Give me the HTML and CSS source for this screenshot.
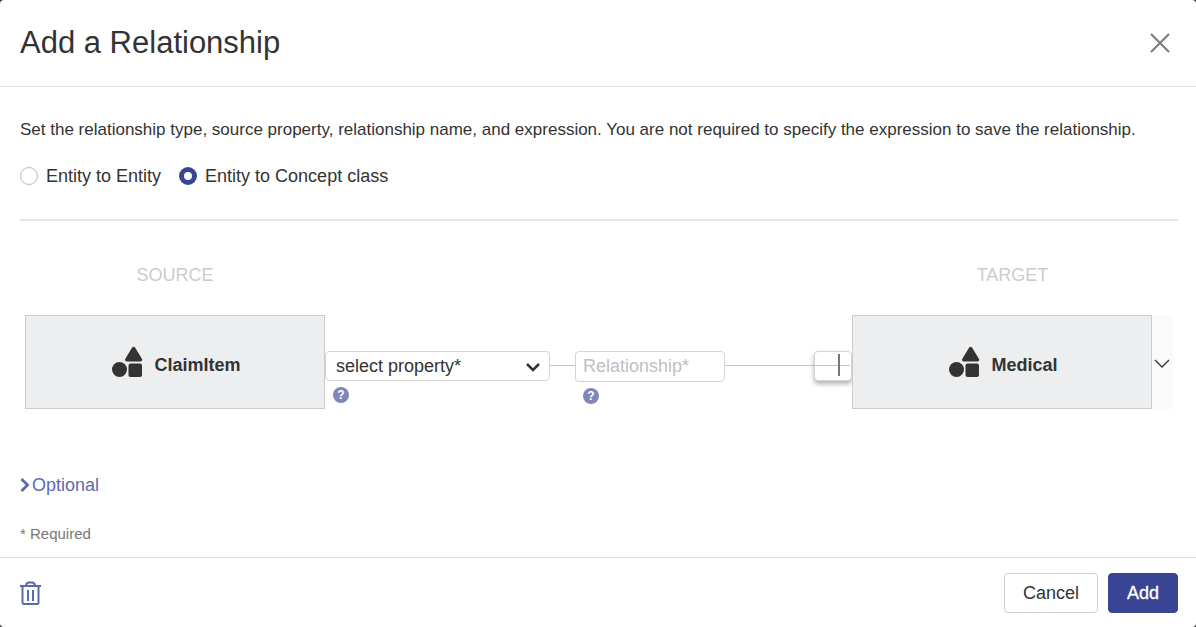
FILE: index.html
```html
<!DOCTYPE html>
<html lang="en">
<head>
  <meta charset="UTF-8" />
  <meta name="viewport" content="width=device-width, initial-scale=1.0"/>
  <title>Add a Relationship</title>
  <link rel="stylesheet" href="styles.css">
</head>
<body>
  <div class="modal">
    <header class="modal-header">
      <h1>Add a Relationship</h1>
      <button class="icon-btn" type="button" aria-label="Close">
        <svg width="20" height="20" viewBox="0 0 20 20" fill="none" stroke="#7a7a7a" stroke-width="2">
          <path d="M1 1l18 18M19 1L1 19"/>
        </svg>
      </button>
    </header>

    <main class="modal-body">
      <p class="intro">Set the relationship type, source property, relationship name, and expression. You are not required to specify the expression to save the relationship.</p>

      <div class="types">
        <label><input type="radio" name="type" value="entity"> Entity to Entity</label>
        <label><input type="radio" name="type" value="concept" checked> Entity to Concept class</label>
      </div>

      <hr>

      <div class="mapping">
        <section class="node">
          <h2>SOURCE</h2>
          <div class="card">
            <svg class="shapes" width="32" height="32" viewBox="0 0 32 32" fill="#333">
              <path d="M21 1.800Q22.600-.2 24.200 1.800L31 13Q31.600 15.400 29.500 15.500H15.700Q13.600 15.400 14.200 13Z"/>
              <circle cx="8.500" cy="23.500" r="7.500"/>
              <rect x="17.500" y="17.500" width="13.500" height="13.500" rx="2"/>
            </svg>
            <span>ClaimItem</span>
          </div>
        </section>

        <div class="link">
          <div class="field property">
            <div class="select-wrap">
              <select aria-label="Source property">
                <option>select property*</option>
              </select>
              <svg class="chevron" width="14" height="10" viewBox="0 0 14 10" fill="none" stroke="#333" stroke-width="2.500">
                <path d="M1 2l6 6 6-6"/>
              </svg>
            </div>
            <button class="help" type="button" aria-label="Property help">?</button>
          </div>
          <div class="line short"></div>
          <div class="field name">
            <input type="text" placeholder="Relationship*" aria-label="Relationship">
            <button class="help" type="button" aria-label="Relationship help">?</button>
          </div>
          <div class="line"></div>
          <button class="join" type="button" aria-label="Join property">
            <svg width="36" height="28" viewBox="0 0 36 28">
              <path d="M0 13.500h35" stroke="#c4c4c4"/>
              <path d="M24 2v22" stroke="#777" stroke-width="2"/>
            </svg>
          </button>
        </div>

        <section class="node">
          <h2>TARGET</h2>
          <div class="target">
            <div class="card">
              <svg class="shapes" width="32" height="32" viewBox="0 0 32 32" fill="#333">
                <path d="M21 1.800Q22.600-.2 24.200 1.800L31 13Q31.600 15.400 29.500 15.500H15.700Q13.600 15.400 14.200 13Z"/>
                <circle cx="8.500" cy="23.500" r="7.500"/>
                <rect x="17.500" y="17.500" width="13.500" height="13.500" rx="2"/>
              </svg>
              <span>Medical</span>
            </div>
            <button class="toggle" type="button" aria-label="Choose target">
              <svg width="16" height="10" viewBox="0 0 16 10" fill="none" stroke="#333" stroke-width="1.300">
                <path d="M1 1l7 7 7-7"/>
              </svg>
            </button>
          </div>
        </section>
      </div>

      <a class="optional" href="#">
        <svg width="10" height="14" viewBox="0 0 10 14" fill="none" stroke="#5b69af" stroke-width="2.800">
          <path d="M1.500 1l6 6-6 6"/>
        </svg>
        Optional
      </a>
      <p class="required">* Required</p>
    </main>

    <footer class="modal-footer">
      <button class="icon-btn" type="button" aria-label="Delete">
        <svg width="21" height="25" viewBox="0 0 21 25" fill="none" stroke="#5b69af" stroke-width="2">
          <path d="M0 5h21" />
          <path d="M6 5q0-3.500 3-3.500h3q3 0 3 3.500"/>
          <path d="M2.500 5v16.500q0 1.500 1.500 1.500h13q1.500 0 1.500-1.500V5"/>
          <path d="M8 9v11M13 9v11"/>
        </svg>
      </button>
      <div class="actions">
        <button class="btn" type="button">Cancel</button>
        <button class="btn primary" type="button">Add</button>
      </div>
    </footer>
  </div>
</body>
</html>
```

FILE: styles.css
```css
* {
  box-sizing: border-box;
}

body {
  margin: 0;
  background-color: #333;
  color: #333;
  font-family: Arial, "Liberation Sans", sans-serif;
  font-size: 18px;
  line-height: 24px;
}

button, input, select {
  font-family: inherit;
  font-size: inherit;
  color: inherit;
}

button {
  cursor: pointer;
}

svg {
  display: block;
}

.modal {
  display: flex;
  flex-direction: column;
  min-height: 100vh;
  background: white;
  border-radius: 4px;
}

.modal-header {
  display: flex;
  align-items: center;
  justify-content: space-between;
  padding: 24px 26px 24px 20px;
  border-bottom: 1px solid #dedfe6;
}

.modal-header h1 {
  margin: 0;
  font-size: 31px;
  font-weight: normal;
  line-height: 38px;
}

.icon-btn {
  padding: 0;
  border: none;
  background: none;
}

.modal-body {
  flex: 1;
  padding: 31px 18px 11px 20px;
}

.intro {
  margin: 0 0 22px;
  font-size: 17px;
}

.types {
  display: flex;
  gap: 18px;
}

.types label {
  display: flex;
  align-items: center;
  gap: 8px;
}

.types input {
  appearance: none;
  width: 18px;
  height: 18px;
  margin: 0;
  border: 1px solid #bbb;
  border-radius: 50%;
}

.types input:checked {
  border: 5px solid #394494;
}

hr {
  height: 2px;
  margin: 31px 0 42px;
  border: none;
  background-color: #e5e5e5;
}

.mapping {
  display: flex;
  align-items: flex-end;
  padding: 0 5px;
}

.node h2 {
  margin: 0 0 28px;
  color: #ccc;
  font-size: 18px;
  font-weight: normal;
  text-align: center;
}

.card {
  display: flex;
  align-items: center;
  justify-content: center;
  gap: 11px;
  width: 300px;
  height: 94px;
  padding-left: 2px;
  background-color: #edeef0;
  border: 1px solid #cacccf;
  font-weight: bold;
}

.card span {
  padding-top: 6px;
}

.target {
  display: flex;
}

.toggle {
  width: 21px;
  padding: 4px 2px 0;
  border: none;
  background-color: #fafafa;
}

.link {
  display: flex;
  flex: 1;
  align-items: flex-start;
  height: 58px;
}

.property {
  width: 225px;
}

.name {
  width: 150px;
}

.select-wrap {
  position: relative;
}

.select-wrap select {
  appearance: none;
  display: block;
  width: 100%;
  height: 30px;
  padding: 0 10px;
  border: 1px solid #d4d4d4;
  border-radius: 4px;
  background: white;
}

.chevron {
  position: absolute;
  top: 11px;
  right: 10px;
  pointer-events: none;
}

.name input {
  display: block;
  width: 100%;
  height: 31px;
  padding: 0 7px;
  border: 1px solid #d4d4d4;
  border-radius: 4px;
}

.name input::placeholder {
  color: #c0c0c0;
}

.help {
  display: block;
  width: 16px;
  height: 16px;
  margin: 6px 8px 0;
  padding: 0;
  border: none;
  border-radius: 50%;
  background-color: #7f86b9;
  color: white;
  font-size: 12px;
  font-weight: bold;
  line-height: 16px;
}

.line {
  flex: 1;
  height: 1px;
  margin-top: 14px;
  background-color: #c4c4c4;
}

.short {
  flex: 0 0 25px;
}

.join {
  width: 38px;
  height: 30px;
  padding: 0;
  border: 1px solid #d4d4d4;
  border-radius: 4px;
  background: white;
  box-shadow: 0 3px 5px rgba(0, 0, 0, 0.3);
}

.optional {
  display: flex;
  align-items: center;
  gap: 2px;
  width: max-content;
  margin-top: 64px;
  color: #5b69af;
  text-decoration: none;
}

.required {
  margin: 25px 0 0;
  color: #777;
  font-size: 15px;
}

.modal-footer {
  display: flex;
  align-items: center;
  justify-content: space-between;
  padding: 15px 18px 14px 20px;
  border-top: 1px solid #dedede;
}

.actions {
  display: flex;
  gap: 10px;
}

.btn {
  height: 40px;
  padding: 0 18px;
  border: 1px solid #d0d0d0;
  border-radius: 4px;
  background: white;
}

.primary {
  border-color: #394494;
  background-color: #394494;
  color: white;
  -webkit-text-stroke: 0.3px white;
}
```
